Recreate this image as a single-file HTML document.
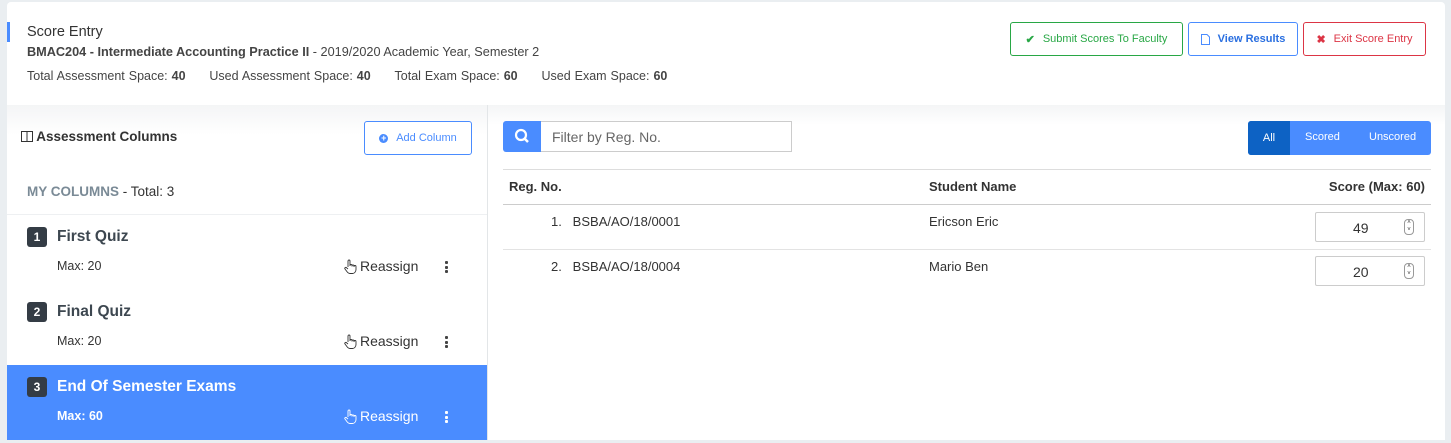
<!DOCTYPE html>
<html><head><style>
*{margin:0;padding:0;box-sizing:border-box}
body{width:1451px;height:443px;background:#eaeef1;font-family:"Liberation Sans",sans-serif;color:#333;position:relative;overflow:hidden}
.a{position:absolute;white-space:nowrap}
.btn{position:absolute;height:34px;border:1px solid;border-radius:3px;background:#fff;font-size:11px;display:flex;align-items:center;justify-content:center;gap:8px}
.badge{position:absolute;width:20px;height:20px;background:#343c45;color:#fff;border-radius:3px;font-size:12px;font-weight:bold;text-align:center;line-height:20px}
.dots{position:absolute;width:3px}
.dots i{display:block;width:3px;height:3px;background:#444;margin-bottom:1.5px;border-radius:1px}
.inp{position:absolute;width:110px;height:30px;border:1px solid #ccc;border-radius:2px;background:#fff;font-size:14px}
.re{position:absolute;font-size:14px;display:flex;align-items:center;gap:3px}
</style></head><body>
<div class="a" style="left:7px;top:2px;width:1438px;height:103px;background:#fff;border-radius:4px 4px 0 0"></div>
<div class="a" style="left:7px;top:22px;width:3px;height:20px;background:#4a8cff"></div>
<div class="a" style="left:27px;top:24px;font-size:14.5px;color:#333">Score Entry</div>
<div class="a" style="left:27px;top:45px;font-size:12.7px;color:#444"><b>BMAC204 - Intermediate Accounting Practice II</b> - 2019/2020 Academic Year, Semester 2</div>
<div class="a" style="left:27px;top:69px;font-size:12.5px;color:#444;word-spacing:0.5px">Total Assessment Space: <b>40</b>&nbsp;&nbsp;&nbsp;&nbsp;&nbsp;&nbsp;Used Assessment Space: <b>40</b>&nbsp;&nbsp;&nbsp;&nbsp;&nbsp;&nbsp;Total Exam Space: <b>60</b>&nbsp;&nbsp;&nbsp;&nbsp;&nbsp;&nbsp;Used Exam Space: <b>60</b></div>
<div class="btn" style="left:1010px;top:22px;width:173px;border-color:#28a745;color:#28a745"><span style="font-weight:bold">✔</span>Submit Scores To Faculty</div>
<div class="btn" style="left:1188px;top:22px;width:110px;border-color:#4a8cff;color:#2a6fe0;font-weight:bold"><svg width="9" height="11"><path d="M0.5 0.5h5.5l2.5 2.5v7.5h-8z" fill="none" stroke="#4a8cff"/></svg>View Results</div>
<div class="btn" style="left:1303px;top:22px;width:123px;border-color:#dc3545;color:#dc3545"><span style="font-weight:bold">✖</span>Exit Score Entry</div>

<div class="a" style="left:7px;top:105px;width:480px;height:335px;background:#fff"></div>
<div class="a" style="left:7px;top:105px;width:480px;height:110px;background:linear-gradient(#f4f5f6,#fff 30px)"></div>
<div class="a" style="left:488px;top:105px;width:957px;height:335px;background:linear-gradient(#f4f5f6,#fff 20px)"></div>
<div class="a" style="left:487px;top:105px;width:1px;height:335px;background:#e3e6e8"></div>
<div class="a" style="left:21px;top:129px;font-size:13.5px;font-weight:bold;color:#333"><span style="display:inline-block;width:12px;height:11px;border:1px solid #333;vertical-align:-1px;background:linear-gradient(90deg,transparent 4.5px,#333 4.5px,#333 5.5px,transparent 5.5px)"></span> Assessment Columns</div>
<div class="btn" style="left:364px;top:121px;width:108px;border-color:#4a8cff;color:#4a8cff;height:34px"><span style="display:inline-block;width:9px;height:9px;border-radius:50%;background:#4a8cff;color:#fff;font-size:9px;line-height:9px;text-align:center;font-weight:bold">+</span>Add Column</div>
<div class="a" style="left:27px;top:184px;font-size:13.5px;color:#333"><span style="color:#7a8a96;font-weight:bold">MY COLUMNS</span> - Total: 3</div>
<div class="a" style="left:7px;top:214px;width:480px;height:1px;background:#eef0f2"></div>

<div class="badge" style="left:27px;top:227px">1</div>
<div class="a" style="left:57px;top:228px;font-size:15.5px;font-weight:bold;color:#3d4750">First Quiz</div>
<div class="a" style="left:57px;top:259px;font-size:12.5px;color:#333">Max: 20</div>
<div class="re" style="left:344px;top:258px;color:#333"><svg width="13" height="15" viewBox="0 0 13 15"><path d="M4 8V2a1 1 0 0 1 2 0v5M6 6.5a1 1 0 0 1 2 0v1M8 7a1 1 0 0 1 2 0v1M10 7.5a1 1 0 0 1 2 0v3c0 2-1.5 4-3.5 4H6c-1.5 0-2.5-1-3.5-2.5L1 10a1 1 0 0 1 1.6-1.2L4 10" fill="none" stroke="#333" stroke-width="0.9"/></svg>Reassign</div>
<div class="dots" style="left:445px;top:261px"><i></i><i></i><i></i></div>

<div class="badge" style="left:27px;top:302px">2</div>
<div class="a" style="left:57px;top:303px;font-size:15.5px;font-weight:bold;color:#3d4750">Final Quiz</div>
<div class="a" style="left:57px;top:334px;font-size:12.5px;color:#333">Max: 20</div>
<div class="re" style="left:344px;top:333px;color:#333"><svg width="13" height="15" viewBox="0 0 13 15"><path d="M4 8V2a1 1 0 0 1 2 0v5M6 6.5a1 1 0 0 1 2 0v1M8 7a1 1 0 0 1 2 0v1M10 7.5a1 1 0 0 1 2 0v3c0 2-1.5 4-3.5 4H6c-1.5 0-2.5-1-3.5-2.5L1 10a1 1 0 0 1 1.6-1.2L4 10" fill="none" stroke="#333" stroke-width="0.9"/></svg>Reassign</div>
<div class="dots" style="left:445px;top:336px"><i></i><i></i><i></i></div>

<div class="a" style="left:7px;top:365px;width:480px;height:75px;background:#4a8cff"></div>
<div class="badge" style="left:27px;top:377px">3</div>
<div class="a" style="left:57px;top:378px;font-size:15.5px;font-weight:bold;color:#fff">End Of Semester Exams</div>
<div class="a" style="left:57px;top:409px;font-size:12.5px;color:#fff;font-weight:bold">Max: 60</div>
<div class="re" style="left:344px;top:408px;color:#fff"><svg width="13" height="15" viewBox="0 0 13 15"><path d="M4 8V2a1 1 0 0 1 2 0v5M6 6.5a1 1 0 0 1 2 0v1M8 7a1 1 0 0 1 2 0v1M10 7.5a1 1 0 0 1 2 0v3c0 2-1.5 4-3.5 4H6c-1.5 0-2.5-1-3.5-2.5L1 10a1 1 0 0 1 1.6-1.2L4 10" fill="none" stroke="#fff" stroke-width="0.9"/></svg>Reassign</div>
<div class="dots" style="left:445px;top:411px"><i style="background:#fff"></i><i style="background:#fff"></i><i style="background:#fff"></i></div>

<div class="a" style="left:503px;top:121px;width:38px;height:31px;background:#4a8cff;border-radius:3px 0 0 3px"><svg width="38" height="31"><circle cx="18" cy="14" r="5" fill="none" stroke="#fff" stroke-width="2.2"/><line x1="21.5" y1="17.5" x2="25" y2="21" stroke="#fff" stroke-width="2.5"/></svg></div>
<div class="a" style="left:541px;top:121px;width:251px;height:31px;border:1px solid #ccc;border-left:0;background:#fff;font-size:14px;color:#666;padding:7px 0 0 11px">Filter by Reg. No.</div>
<div class="a" style="left:1248px;top:121px;width:183px;height:34px;background:#4a8cff;border-radius:3px;color:#fff;font-size:11px"></div>
<div class="a" style="left:1248px;top:121px;width:42px;height:34px;background:#0d62c4;border-radius:3px 0 0 3px;color:#fff;font-size:11px;text-align:center;line-height:34px">All</div>
<div class="a" style="left:1305px;top:131px;font-size:11px;color:#fff">Scored</div>
<div class="a" style="left:1369px;top:131px;font-size:11px;color:#fff">Unscored</div>

<div class="a" style="left:503px;top:169px;width:928px;height:1px;background:#ddd"></div>
<div class="a" style="left:509px;top:179px;font-size:13px;font-weight:bold">Reg. No.</div>
<div class="a" style="left:929px;top:179px;font-size:13px;font-weight:bold">Student Name</div>
<div class="a" style="right:26px;top:179px;font-size:13px;font-weight:bold">Score (Max: 60)</div>
<div class="a" style="left:503px;top:204px;width:928px;height:1px;background:#ccc"></div>
<div class="a" style="left:551px;top:214px;font-size:13px">1.&nbsp;&nbsp;&nbsp;BSBA/AO/18/0001</div>
<div class="a" style="left:929px;top:214px;font-size:13px">Ericson Eric</div>
<div class="inp" style="left:1315px;top:212px"><span class="a" style="left:37px;top:7px">49</span><span class="a" style="left:88px;top:6px;width:10px;height:16px;border:1px solid #999;border-radius:4px;font-size:6px;text-align:center;line-height:7px">˄<br>˅</span></div>
<div class="a" style="left:503px;top:249px;width:928px;height:1px;background:#e3e3e3"></div>
<div class="a" style="left:551px;top:259px;font-size:13px">2.&nbsp;&nbsp;&nbsp;BSBA/AO/18/0004</div>
<div class="a" style="left:929px;top:259px;font-size:13px">Mario Ben</div>
<div class="inp" style="left:1315px;top:256px"><span class="a" style="left:37px;top:7px">20</span><span class="a" style="left:88px;top:6px;width:10px;height:16px;border:1px solid #999;border-radius:4px;font-size:6px;text-align:center;line-height:7px">˄<br>˅</span></div>
</body></html>
